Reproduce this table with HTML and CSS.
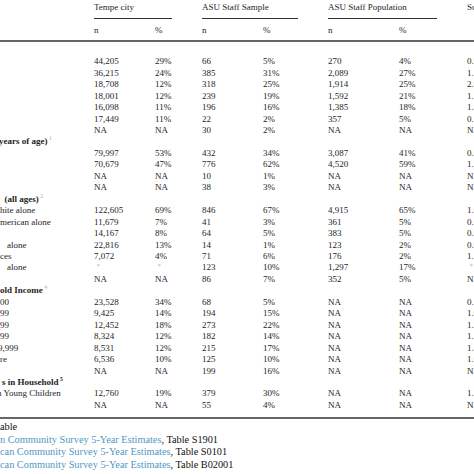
FILE: index.html
```html
<!DOCTYPE html>
<html>
<head>
<meta charset="utf-8">
<link rel="stylesheet" href="styles.css">
</head>
<body>
<div class="page">
  <div class="head1">
    <div></div>
    <div class="group">Tempe city</div>
    <div class="group">ASU Staff Sample</div>
    <div class="group">ASU Staff Population</div>
    <div class="solo">Sub-sample ratio</div>
  </div>
  <div class="head2">
    <div></div><div>n</div><div>%</div><div>n</div><div>%</div><div>n</div><div>%</div><div></div>
  </div>
  <div class="body">
    <div class="row"><div></div><div>44,205</div><div>29%</div><div>66</div><div>5%</div><div>270</div><div>4%</div><div>0.62</div></div>
    <div class="row"><div></div><div>36,215</div><div>24%</div><div>385</div><div>31%</div><div>2,089</div><div>27%</div><div>1.15</div></div>
    <div class="row"><div></div><div>18,708</div><div>12%</div><div>318</div><div>25%</div><div>1,914</div><div>25%</div><div>2.08</div></div>
    <div class="row"><div></div><div>18,001</div><div>12%</div><div>239</div><div>19%</div><div>1,592</div><div>21%</div><div>1.58</div></div>
    <div class="row"><div></div><div>16,098</div><div>11%</div><div>196</div><div>16%</div><div>1,385</div><div>18%</div><div>1.45</div></div>
    <div class="row"><div></div><div>17,449</div><div>11%</div><div>22</div><div>2%</div><div>357</div><div>5%</div><div>0.18</div></div>
    <div class="row"><div></div><div>NA</div><div>NA</div><div>30</div><div>2%</div><div>NA</div><div>NA</div><div>NA</div></div>
    <div class="row"><div class="lbl bold neg1">years of age)<sup class="ref">1</sup></div></div>
    <div class="row"><div></div><div>79,997</div><div>53%</div><div>432</div><div>34%</div><div>3,087</div><div>41%</div><div>0.64</div></div>
    <div class="row"><div></div><div>70,679</div><div>47%</div><div>776</div><div>62%</div><div>4,520</div><div>59%</div><div>1.32</div></div>
    <div class="row"><div></div><div>NA</div><div>NA</div><div>10</div><div>1%</div><div>NA</div><div>NA</div><div>NA</div></div>
    <div class="row"><div></div><div>NA</div><div>NA</div><div>38</div><div>3%</div><div>NA</div><div>NA</div><div>NA</div></div>
    <div class="row"><div class="lbl bold ind5">(all ages)<sup class="ref">2</sup></div></div>
    <div class="row"><div class="lbl">hite alone</div><div>122,605</div><div>69%</div><div>846</div><div>67%</div><div>4,915</div><div>65%</div><div>1.03</div></div>
    <div class="row"><div class="lbl">merican alone</div><div>11,679</div><div>7%</div><div>41</div><div>3%</div><div>361</div><div>5%</div><div>0.60</div></div>
    <div class="row"><div></div><div>14,167</div><div>8%</div><div>64</div><div>5%</div><div>383</div><div>5%</div><div>0.63</div></div>
    <div class="row"><div class="lbl ind7">alone</div><div>22,816</div><div>13%</div><div>14</div><div>1%</div><div>123</div><div>2%</div><div>0.08</div></div>
    <div class="row"><div class="lbl">ces</div><div>7,072</div><div>4%</div><div>71</div><div>6%</div><div>176</div><div>2%</div><div>1.50</div></div>
    <div class="row"><div class="lbl ind7">alone</div><div class="star">*</div><div class="star">*</div><div>123</div><div>10%</div><div>1,297</div><div>17%</div><div class="star">*</div></div>
    <div class="row"><div></div><div>NA</div><div>NA</div><div>86</div><div>7%</div><div>352</div><div>5%</div><div>NA</div></div>
    <div class="row"><div class="lbl bold">old Income<sup class="ref">4</sup></div></div>
    <div class="row"><div class="lbl">00</div><div>23,528</div><div>34%</div><div>68</div><div>5%</div><div>NA</div><div>NA</div><div>0.15</div></div>
    <div class="row"><div class="lbl">99</div><div>9,425</div><div>14%</div><div>194</div><div>15%</div><div>NA</div><div>NA</div><div>1.07</div></div>
    <div class="row"><div class="lbl">99</div><div>12,452</div><div>18%</div><div>273</div><div>22%</div><div>NA</div><div>NA</div><div>1.22</div></div>
    <div class="row"><div class="lbl">99</div><div>8,324</div><div>12%</div><div>182</div><div>14%</div><div>NA</div><div>NA</div><div>1.17</div></div>
    <div class="row"><div class="lbl neg2">9,999</div><div>8,531</div><div>12%</div><div>215</div><div>17%</div><div>NA</div><div>NA</div><div>1.42</div></div>
    <div class="row"><div class="lbl">re</div><div>6,536</div><div>10%</div><div>125</div><div>10%</div><div>NA</div><div>NA</div><div>1.00</div></div>
    <div class="row"><div></div><div>NA</div><div>NA</div><div>199</div><div>16%</div><div>NA</div><div>NA</div><div>NA</div></div>
    <div class="row"><div class="lbl bold ind2">s in Household<sup class="dark">5</sup></div></div>
    <div class="row"><div class="lbl neg3">h Young Children</div><div>12,760</div><div>19%</div><div>379</div><div>30%</div><div>NA</div><div>NA</div><div>1.58</div></div>
    <div class="row"><div></div><div>NA</div><div>NA</div><div>55</div><div>4%</div><div>NA</div><div>NA</div><div>NA</div></div>
  </div>
  <div class="notes">
    <p class="note-title">able</p>
    <p><a class="src">n Community Survey 5-Year Estimates</a>, Table S1901</p>
    <p><a class="src">can Community Survey 5-Year Estimates</a>, Table S0101</p>
    <p><a class="src">can Community Survey 5-Year Estimates</a>, Table B02001</p>
  </div>
</div>
</body>
</html>
```
FILE: styles.css
```css
html, body {
  margin: 0;
  padding: 0;
  background: #ffffff;
}
body {
  width: 474px;
  height: 474px;
  overflow: hidden;
  font-family: "Liberation Serif", "Times New Roman", serif;
  font-size: 9px;
  color: #1e1e1e;
}
.page {
  width: 474px;
}
.head1, .head2, .row {
  display: grid;
  grid-template-columns: 94px 61px 47px 61px 65px 71px 68px 40px;
  white-space: nowrap;
}
.head1 {
  height: 19px;
  line-height: 14px;
}
.head1 .group {
  grid-column: span 2;
  margin-right: 30px;
  border-bottom: 1px solid #333;
  padding-bottom: 4px;
}
.head2 {
  margin-top: 4px;
  line-height: 14px;
  padding-bottom: 3px;
  border-bottom: 2px solid #666;
}
.body {
  padding-top: 14.3px;
  padding-bottom: 5.3px;
  border-bottom: 2px solid #666;
}
.row {
  height: 11.467px;
  line-height: 11.467px;
}
.lbl {
  grid-column: 1;
}
.bold {
  font-weight: 700;
  grid-column: 1 / span 3;
}
.ind2 { padding-left: 2px; }
.ind5 { padding-left: 4.5px; }
.ind7 { padding-left: 7px; }
.neg1 { margin-left: -1px; }
.neg2 { margin-left: -2px; }
.neg3 { margin-left: -3px; }
sup {
  font-size: 5.5px;
  line-height: 0;
  vertical-align: 4px;
  margin-left: 1.5px;
  font-weight: 400;
}
.ref { color: #8fb0c8; }
.dark { color: #1e1e1e; font-weight: 700; }
.star {
  color: #a3afba;
  font-size: 7px;
  padding-left: 2.5px;
  line-height: 9px;
}
.notes {
  margin-top: 2.2px;
  font-size: 10.3px;
  line-height: 12.7px;
  white-space: nowrap;
  color: #111;
}
.notes p {
  margin: 0;
}
.src {
  color: #4f97c4;
  text-decoration: none;
}
```
